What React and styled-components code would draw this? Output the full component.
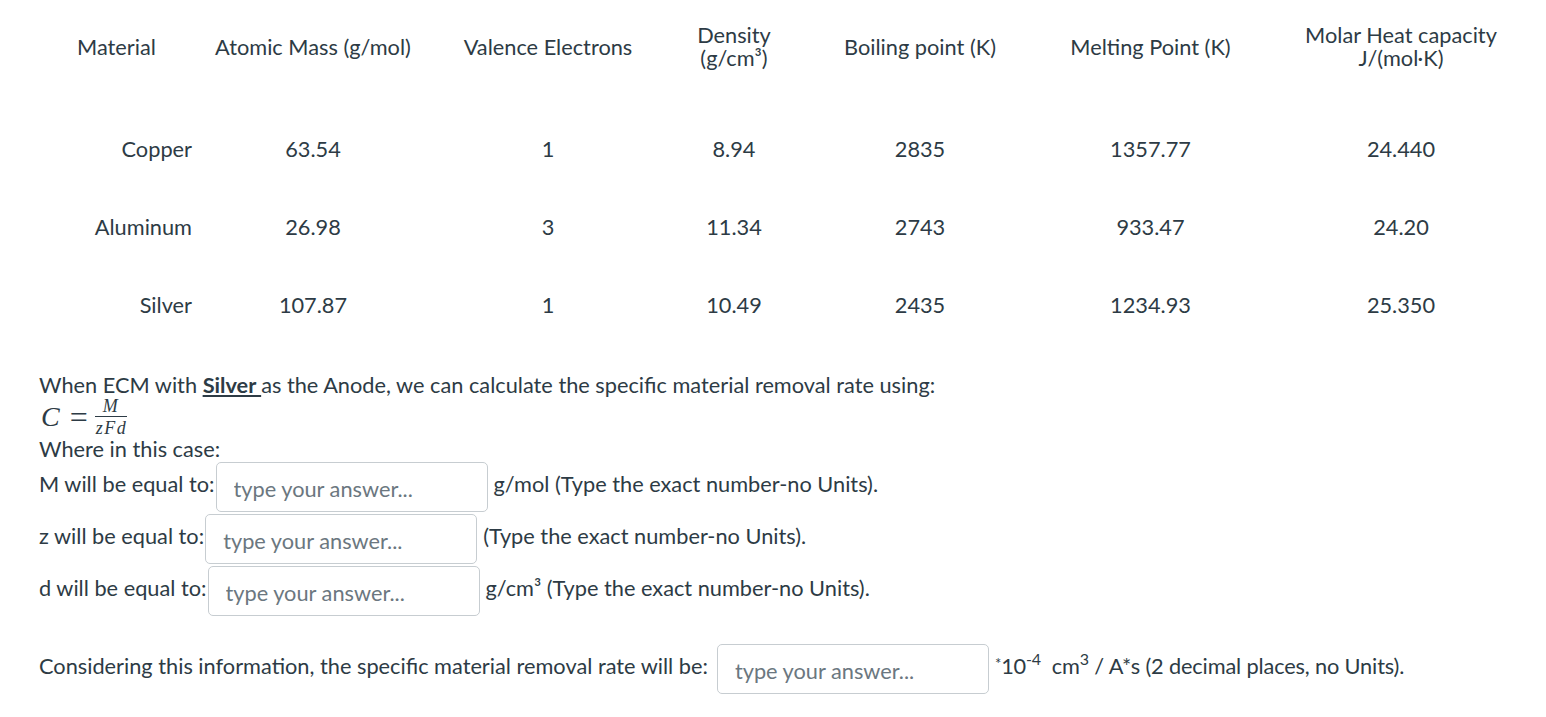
import React from 'react'
import styled, { createGlobalStyle } from 'styled-components'

const GlobalStyle = createGlobalStyle`
  body {
    margin: 0;
    background: #fff;
    font-family: Lato, "Open Sans", sans-serif;
    color: #2d3b45;
  }
`

const Page = styled.div`
  padding: 8px 0 0 39px;
  font-size: 21.75px;
  line-height: 24px;
`

const Table = styled.table`
  border-collapse: collapse;
  table-layout: fixed;
`

const Col = styled.col`
  width: ${props => props.w}px;
`

const HeadCell = styled.th`
  font-weight: normal;
  text-align: center;
  height: 78px;
  padding: 0 0 24px;
  line-height: 23px;
  vertical-align: middle;
`

const Cell = styled.td`
  text-align: ${props => (props.right ? 'right' : 'center')};
  padding: 0 ${props => (props.right ? '2px' : '0')} 0 0;
  height: 78px;
  vertical-align: middle;
`

const Question = styled.div`
  margin-top: 29px;
`

const Line = styled.div`
  line-height: 24px;
`

const Underlined = styled.strong`
  text-decoration: underline;
  font-weight: bold;
`

const Formula = styled.div`
  display: flex;
  align-items: center;
  height: 40px;
  padding-left: 2px;
  font-family: "Liberation Serif", "DejaVu Serif", serif;
  font-size: 28px;
`

const Variable = styled.i`
  font-style: italic;
`

const Equals = styled.span`
  font-size: 32px;
  margin: 0 7px 0 10px;
`

const Fraction = styled.span`
  display: inline-flex;
  flex-direction: column;
  align-items: center;
  font-style: italic;
  font-size: 18px;
  line-height: 13px;
  letter-spacing: 1.5px;
`

const Numer = styled.span`
  align-self: stretch;
  text-align: center;
  padding-bottom: 3px;
  border-bottom: 1px solid #2d3b45;
`

const Denom = styled.span`
  padding: 5px 0 0 1px;
`

const AnswerRow = styled.div`
  display: flex;
  align-items: center;
  height: 52px;
  margin-top: ${props => props.top || 0}px;
`

const Label = styled.span`
  margin-bottom: 6px;
  white-space: nowrap;
  letter-spacing: ${props => props.tight ? '-0.15px' : 'normal'};
`

const AnswerInput = styled.input`
  box-sizing: border-box;
  width: 272px;
  height: 50px;
  margin: 0 6px 0 ${props => props.left || 1}px;
  padding: 4px 17px 0;
  border: 1px solid #c7cdd1;
  border-radius: 5px;
  font-family: Lato, sans-serif;
  font-size: 21.75px;
  color: #2d3b45;
  background: #fff;

  &::placeholder {
    color: #6b7780;
  }
`

const Sup = styled.sup`
  font-size: ${props => props.size || 16}px;
  vertical-align: ${props => props.lift || 9}px;
  line-height: 0;
`

const widths = [155, 238, 232, 140, 232, 229, 272]

const rows = [
  ['Copper', '63.54', '1', '8.94', '2835', '1357.77', '24.440'],
  ['Aluminum', '26.98', '3', '11.34', '2743', '933.47', '24.20'],
  ['Silver', '107.87', '1', '10.49', '2435', '1234.93', '25.350'],
]

const App = () => (
  <Page>
    <GlobalStyle />
    <Table>
      <colgroup>
        {widths.map((w, i) => (
          <Col key={i} w={w} />
        ))}
      </colgroup>
      <thead>
        <tr>
          <HeadCell>Material</HeadCell>
          <HeadCell>Atomic Mass (g/mol)</HeadCell>
          <HeadCell>Valence Electrons</HeadCell>
          <HeadCell>
            Density
            <br />
            (g/cm³)
          </HeadCell>
          <HeadCell>Boiling point (K)</HeadCell>
          <HeadCell>Melting Point (K)</HeadCell>
          <HeadCell>
            Molar Heat capacity
            <br />
            J/(mol·K)
          </HeadCell>
        </tr>
      </thead>
      <tbody>
        {rows.map(row => (
          <tr key={row[0]}>
            {row.map((v, i) => (
              <Cell key={i} right={i === 0}>
                {v}
              </Cell>
            ))}
          </tr>
        ))}
      </tbody>
    </Table>

    <Question>
      <Line>
        When ECM with <Underlined>Silver </Underlined>as the Anode, we can calculate the specific
        material removal rate using:
      </Line>
      <Formula>
        <Variable>C</Variable>
        <Equals>=</Equals>
        <Fraction>
          <Numer>M</Numer>
          <Denom>zFd</Denom>
        </Fraction>
      </Formula>
      <Line>Where in this case:</Line>
      <AnswerRow>
        <Label>M will be equal to:</Label>
        <AnswerInput placeholder="type your answer..." />
        <Label>g/mol (Type the exact number-no Units).</Label>
      </AnswerRow>
      <AnswerRow>
        <Label>z will be equal to:</Label>
        <AnswerInput placeholder="type your answer..." />
        <Label>(Type the exact number-no Units).</Label>
      </AnswerRow>
      <AnswerRow>
        <Label>d will be equal to:</Label>
        <AnswerInput placeholder="type your answer..." />
        <Label>g/cm³ (Type the exact number-no Units).</Label>
      </AnswerRow>
      <AnswerRow top={26}>
        <Label>Considering this information, the specific material removal rate will be:</Label>
        <AnswerInput left={9} placeholder="type your answer..." />
        <Label tight>
          <Sup size={15} lift={5}>*</Sup>10<Sup>-4</Sup>&nbsp; cm<Sup>3</Sup> / A*s (2 decimal places, no Units).
        </Label>
      </AnswerRow>
    </Question>
  </Page>
)

export default App
